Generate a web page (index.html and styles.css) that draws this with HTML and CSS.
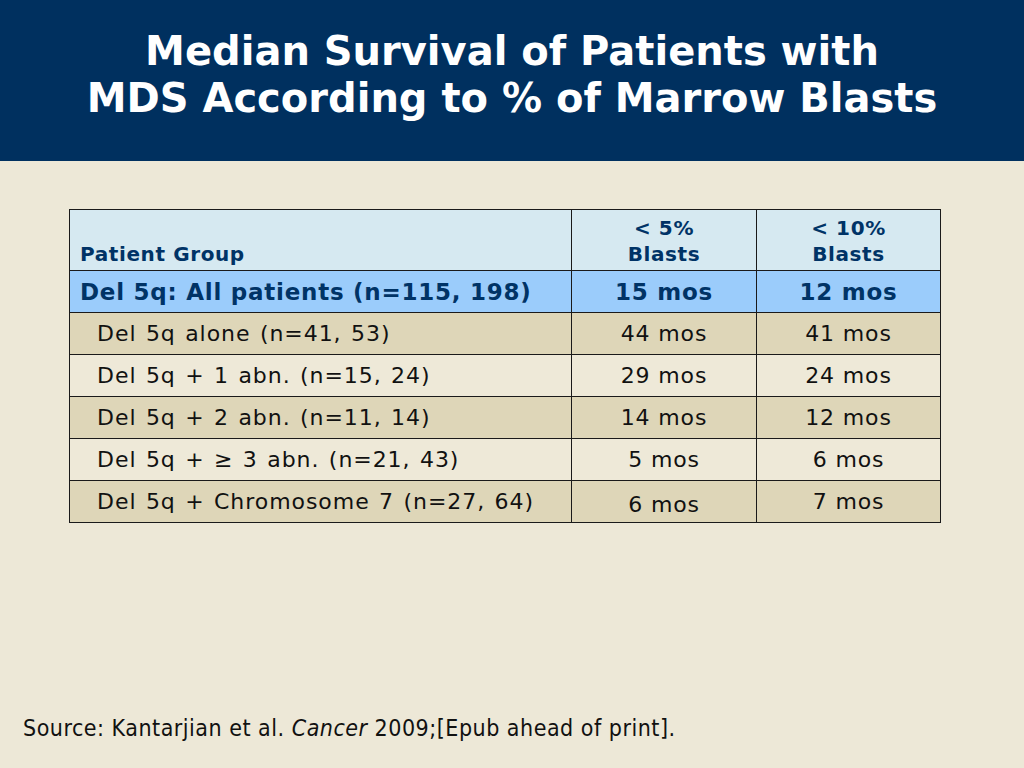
FILE: index.html
```html
<!DOCTYPE html>
<html>
<head>
<meta charset="utf-8">
<link rel="stylesheet" href="styles.css">
</head>
<body>
<div class="slide">
  <header class="title-bar">
    <h1>Median Survival of Patients with<br>MDS According to % of Marrow Blasts</h1>
  </header>
  <main class="content">
    <table class="data">
      <colgroup>
        <col class="c1"><col class="c2"><col class="c3">
      </colgroup>
      <thead>
        <tr class="head">
          <th class="group">Patient Group</th>
          <th>&lt; 5%<br>Blasts</th>
          <th>&lt; 10%<br>Blasts</th>
        </tr>
      </thead>
      <tbody>
        <tr class="hl">
          <td class="lbl">Del 5q: All patients (n=115, 198)</td>
          <td>15 mos</td>
          <td>12 mos</td>
        </tr>
        <tr class="dark">
          <td class="lbl ind">Del 5q alone (n=41, 53)</td>
          <td>44 mos</td>
          <td>41 mos</td>
        </tr>
        <tr class="light">
          <td class="lbl ind">Del 5q + 1 abn. (n=15, 24)</td>
          <td>29 mos</td>
          <td>24 mos</td>
        </tr>
        <tr class="dark">
          <td class="lbl ind">Del 5q + 2 abn. (n=11, 14)</td>
          <td>14 mos</td>
          <td>12 mos</td>
        </tr>
        <tr class="light">
          <td class="lbl ind">Del 5q + ≥ 3 abn. (n=21, 43)</td>
          <td>5 mos</td>
          <td>6 mos</td>
        </tr>
        <tr class="dark">
          <td class="lbl ind">Del 5q + Chromosome 7 (n=27, 64)</td>
          <td class="low">6 mos</td>
          <td>7 mos</td>
        </tr>
      </tbody>
    </table>
    <p class="source">Source: Kantarjian et al. <em>Cancer</em> 2009;[Epub ahead of print].</p>
  </main>
</div>
</body>
</html>
```

FILE: styles.css
```css
html, body {
  margin: 0;
  padding: 0;
}
body {
  width: 1024px;
  height: 768px;
  overflow: hidden;
  background: #ede8d7;
  font-family: "DejaVu Sans", Verdana, sans-serif;
}
.slide {
  display: flex;
  flex-direction: column;
  height: 768px;
}
.title-bar {
  height: 161px;
  background: #00305f;
  display: flex;
  justify-content: center;
  box-sizing: border-box;
  padding-top: 28px;
}
.title-bar h1 {
  margin: 0;
  color: #ffffff;
  font-size: 40px;
  line-height: 47px;
  font-weight: bold;
  text-align: center;
  letter-spacing: 0;
  white-space: nowrap;
}
.content {
  flex: 1;
  display: flex;
  flex-direction: column;
  padding: 48px 0 0 69px;
}
.data {
  border-collapse: collapse;
  width: 871px;
  table-layout: fixed;
}
.c1 { width: 502px; }
.c2 { width: 185px; }
.c3 { width: 184px; }
.data th, .data td {
  border: 1px solid #1a1a1a;
  padding: 0;
}
.head {
  height: 61px;
  background: #d6e9f1;
}
.head th {
  color: #003366;
  font-size: 20px;
  letter-spacing: 0.6px;
  line-height: 26px;
  font-weight: bold;
  text-align: center;
  vertical-align: middle;
  padding-top: 2px;
}
.head th.group {
  text-align: left;
  vertical-align: bottom;
  padding-left: 10px;
  padding-bottom: 3px;
}
.data tbody tr {
  height: 42px;
}
.data tbody td {
  font-size: 22px;
  letter-spacing: 0.85px;
  color: #111111;
  text-align: center;
  vertical-align: middle;
  white-space: nowrap;
}
.data tbody td.lbl {
  text-align: left;
  padding-left: 27px;
  letter-spacing: 0.95px;
  word-spacing: 1.5px;
}
.hl {
  background: #9bccfb;
}
.data tbody .hl td {
  color: #003366;
  font-weight: bold;
  font-size: 23px;
  letter-spacing: 0.75px;
  word-spacing: 0;
}
.data tbody .hl td.lbl {
  padding-left: 10px;
}
.dark {
  background: #ded6b8;
}
.light {
  background: #eee9d8;
}
.data tbody td.low {
  padding-top: 5px;
}
.source {
  margin: auto 0 26px -46px;
  font-family: "DejaVu Sans Condensed", "DejaVu Sans", sans-serif;
  font-size: 23px;
  line-height: 28px;
  letter-spacing: 0.5px;
  color: #111111;
}
.source em {
  font-style: italic;
}
```
